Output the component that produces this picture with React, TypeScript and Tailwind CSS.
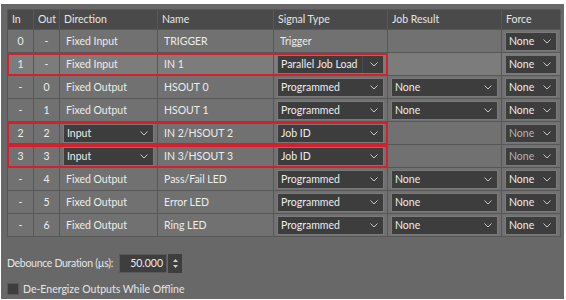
import React from "react";

type Row = {
  inp: string;
  out: string;
  dir: string;
  dirSelect?: boolean;
  name: string;
  sig: string;
  sigSelect?: boolean;
  job?: string;
  force: string;
  forceDim?: boolean;
  selected?: boolean;
  marked?: boolean;
};

const rows: Row[] = [
  { inp: "0", out: "-", dir: "Fixed Input", name: "TRIGGER", sig: "Trigger", force: "None" },
  { inp: "1", out: "-", dir: "Fixed Input", name: "IN 1", sig: "Parallel Job Load", sigSelect: true, force: "None", selected: true, marked: true },
  { inp: "-", out: "0", dir: "Fixed Output", name: "HSOUT 0", sig: "Programmed", sigSelect: true, job: "None", force: "None" },
  { inp: "-", out: "1", dir: "Fixed Output", name: "HSOUT 1", sig: "Programmed", sigSelect: true, job: "None", force: "None" },
  { inp: "2", out: "2", dir: "Input", dirSelect: true, name: "IN 2/HSOUT 2", sig: "Job ID", sigSelect: true, force: "None", forceDim: true, marked: true },
  { inp: "3", out: "3", dir: "Input", dirSelect: true, name: "IN 3/HSOUT 3", sig: "Job ID", sigSelect: true, force: "None", forceDim: true, marked: true },
  { inp: "-", out: "4", dir: "Fixed Output", name: "Pass/Fail LED", sig: "Programmed", sigSelect: true, job: "None", force: "None" },
  { inp: "-", out: "5", dir: "Fixed Output", name: "Error LED", sig: "Programmed", sigSelect: true, job: "None", force: "None" },
  { inp: "-", out: "6", dir: "Fixed Output", name: "Ring LED", sig: "Programmed", sigSelect: true, job: "None", force: "None" },
];

const grid = "grid grid-cols-[26px_26px_98px_116px_114px_114px_59px]";

function Chevron() {
  return (
    <svg width="8" height="5" viewBox="0 0 8 5" className="shrink-0">
      <path d="M0.5 0.5 L4 4 L7.5 0.5" fill="none" stroke="#c8c8c8" strokeWidth="1" />
    </svg>
  );
}

function Select({ value, dim, divider }: { value: string; dim?: boolean; divider?: boolean }) {
  return (
    <div className="mx-[3px] my-[2px] flex h-[19px] items-center justify-between border border-[#7a7a7a] bg-[#3d3d3d] pl-[3px] pr-[5px]">
      <span className={`whitespace-nowrap ${dim ? "text-[#b4b4b4]" : "text-[#ededed]"}`}>{value}</span>
      <div className="flex h-full items-center">
        {divider && <div className="mr-[7px] h-full w-px bg-[#4c4c4c]" />}
        <Chevron />
      </div>
    </div>
  );
}

const cell = "border-r border-b border-[#575757] h-[23px] flex items-center whitespace-nowrap";

export default function App() {
  return (
    <div className="h-[300px] w-[566px] bg-white pt-[4px] pl-[1px] pr-[2px] pb-[1px]" style={{ fontFamily: 'Lato, "Open Sans", sans-serif' }}>
      <div className="h-[295px] w-[563px] bg-[#686868] pt-[5px] pl-[6px] text-[10.5px] leading-none text-[#ededed]">
        <div className="w-[553px] border-l border-t border-[#575757]">
          <div className={`${grid} h-[20px] bg-[#4a4a4a] text-[#e6e6e6]`}>
            {["In", "Out", "Direction", "Name", "Signal Type", "Job Result", "Force"].map((h) => (
              <div key={h} className="flex items-center border-r border-b border-[#575757] pl-[4px]">
                {h}
              </div>
            ))}
          </div>
          {rows.map((r, i) => (
            <div key={i} className={`relative ${grid} ${r.selected ? "bg-[#7c7c7c]" : "bg-[#717171]"}`}>
              <div className={`${cell} justify-center`}>{r.inp}</div>
              <div className={`${cell} justify-center`}>{r.out}</div>
              <div className={`${cell} ${r.dirSelect ? "" : "pl-[6px]"}`}>
                {r.dirSelect ? (
                  <div className="w-full">
                    <Select value={r.dir} />
                  </div>
                ) : (
                  r.dir
                )}
              </div>
              <div className={`${cell} pl-[6px] pt-[1px]`}>{r.name}</div>
              <div className={`${cell} ${r.sigSelect ? "" : "pl-[6px]"}`}>
                {r.sigSelect ? (
                  <div className="w-full">
                    <Select value={r.sig} divider={r.selected} />
                  </div>
                ) : (
                  r.sig
                )}
              </div>
              <div className={cell}>
                {r.job && (
                  <div className="w-full">
                    <Select value={r.job} />
                  </div>
                )}
              </div>
              <div className={cell}>
                <div className="w-full">
                  <Select value={r.force} dim={r.forceDim} />
                </div>
              </div>
              {r.marked && (
                <div className="pointer-events-none absolute left-[-1px] top-[0px] h-[23px] w-[381px] border-2 border-[#d4202c]" />
              )}
            </div>
          ))}
        </div>

        <div className="mt-[17px] flex items-center">
          <span className="tracking-[-0.3px] text-[#e6e6e6]">Debounce Duration (µs):</span>
          <div className="ml-[6px] flex h-[19px] w-[48px] items-center justify-end border border-[#5a5a5a] bg-[#3e3e3e] pr-[3px]">
            50.000
          </div>
          <div className="ml-[1px] flex h-[19px] w-[14px] flex-col items-center justify-center gap-[3px] bg-[#3e3e3e]">
            <svg width="5" height="3" viewBox="0 0 5 3">
              <path d="M0 3 L2.5 0 L5 3 Z" fill="#d0d0d0" />
            </svg>
            <svg width="5" height="3" viewBox="0 0 5 3">
              <path d="M0 0 L2.5 3 L5 0 Z" fill="#d0d0d0" />
            </svg>
          </div>
        </div>

        <div className="mt-[10px] flex items-center">
          <div className="h-[12px] w-[12px] border border-[#595959] bg-[#3e3e3e]" />
          <span className="ml-[4px] text-[#e6e6e6]">De-Energize Outputs While Offline</span>
        </div>
      </div>
    </div>
  );
}
